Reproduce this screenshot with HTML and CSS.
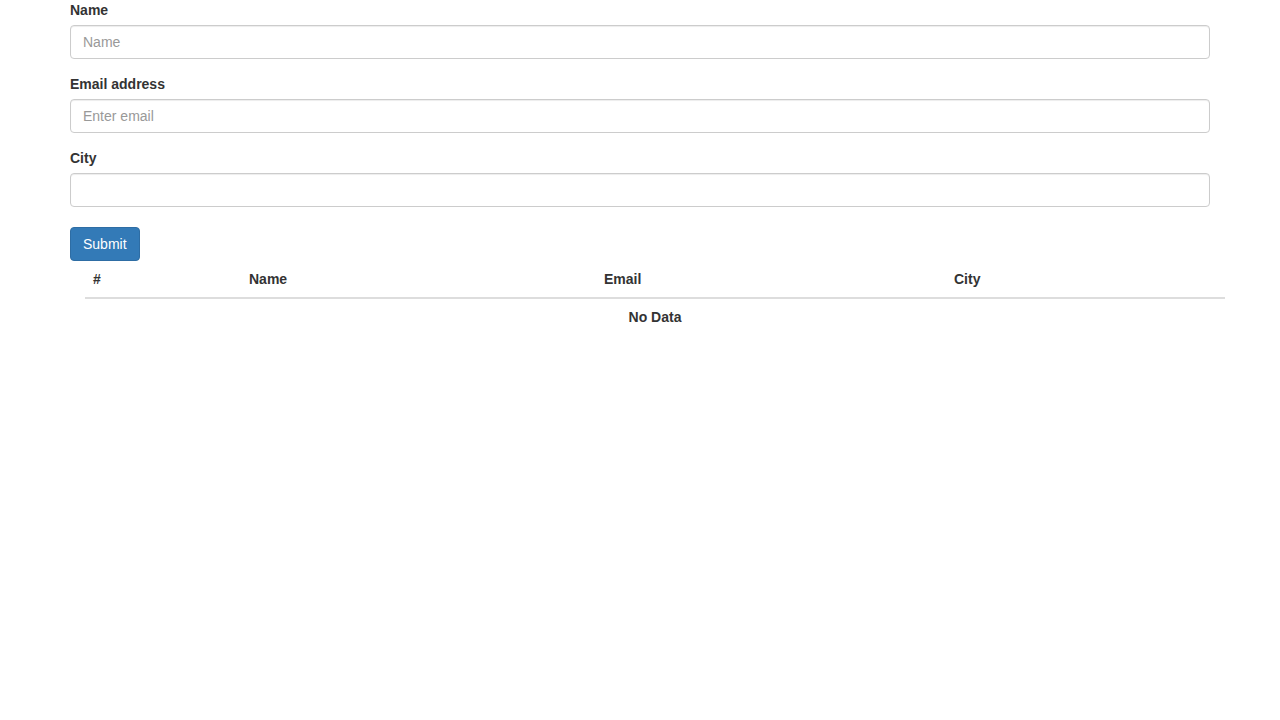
FILE: index.html
```html
<!DOCTYPE html>
<html>
<head>
<meta charset="utf-8">
<link rel="stylesheet" href="styles.css">
</head>
<body>
<div class="container">
  <form class="form">
    <div class="form-group">
      <label class="label">Name</label>
      <input class="input" type="text" placeholder="Name">
    </div>
    <div class="form-group">
      <label class="label">Email address</label>
      <input class="input" type="email" placeholder="Enter email">
    </div>
    <div class="form-group">
      <label class="label">City</label>
      <input class="input" type="text">
    </div>
    <button class="btn" type="button">Submit</button>
  </form>
  <table class="table">
    <thead>
      <tr>
        <th class="c1">#</th>
        <th class="c2">Name</th>
        <th class="c3">Email</th>
        <th class="c4">City</th>
      </tr>
    </thead>
    <tbody>
      <tr><td class="empty" colspan="4">No Data</td></tr>
    </tbody>
  </table>
</div>
</body>
</html>
```
FILE: styles.css
```css
* { box-sizing: border-box; }
html, body { margin: 0; padding: 0; background: #fff; }
body {
  font-family: "Liberation Sans", Arial, sans-serif;
  font-size: 14px;
  line-height: 20px;
  color: #333;
}
.container {
  width: 1170px;
  margin: 0 auto;
  padding: 0 15px;
}
.form { display: block; margin: 0; }
.form-group { margin-bottom: 15px; }
.label {
  display: block;
  font-weight: bold;
  margin-bottom: 5px;
  height: 20px;
}
.input {
  display: block;
  width: 100%;
  height: 34px;
  padding: 6px 12px;
  font-family: inherit;
  font-size: 14px;
  line-height: 20px;
  color: #555;
  background: #fff;
  border: 1px solid #ccc;
  border-radius: 4px;
  box-shadow: inset 0 1px 1px rgba(0,0,0,.075);
  margin: 0;
}
.input::placeholder { color: #999; }
.btn {
  display: block;
  margin-top: 20px;
  height: 34px;
  padding: 6px 12px;
  font-family: inherit;
  font-size: 14px;
  line-height: 20px;
  color: #fff;
  background: #337ab7;
  border: 1px solid #2e6da4;
  border-radius: 4px;
  cursor: pointer;
}
.table {
  width: 1140px;
  margin-left: 15px;
  border-collapse: collapse;
  border-spacing: 0;
}
.table th {
  text-align: left;
  font-weight: bold;
  padding: 8px;
  line-height: 20px;
  border-bottom: 2px solid #ddd;
  vertical-align: bottom;
}
.c1 { width: 156px; }
.c2 { width: 355px; }
.c3 { width: 350px; }
.c4 { width: 279px; }
.table td {
  padding: 8px;
  line-height: 20px;
}
.empty { text-align: center; font-weight: bold; }
```
